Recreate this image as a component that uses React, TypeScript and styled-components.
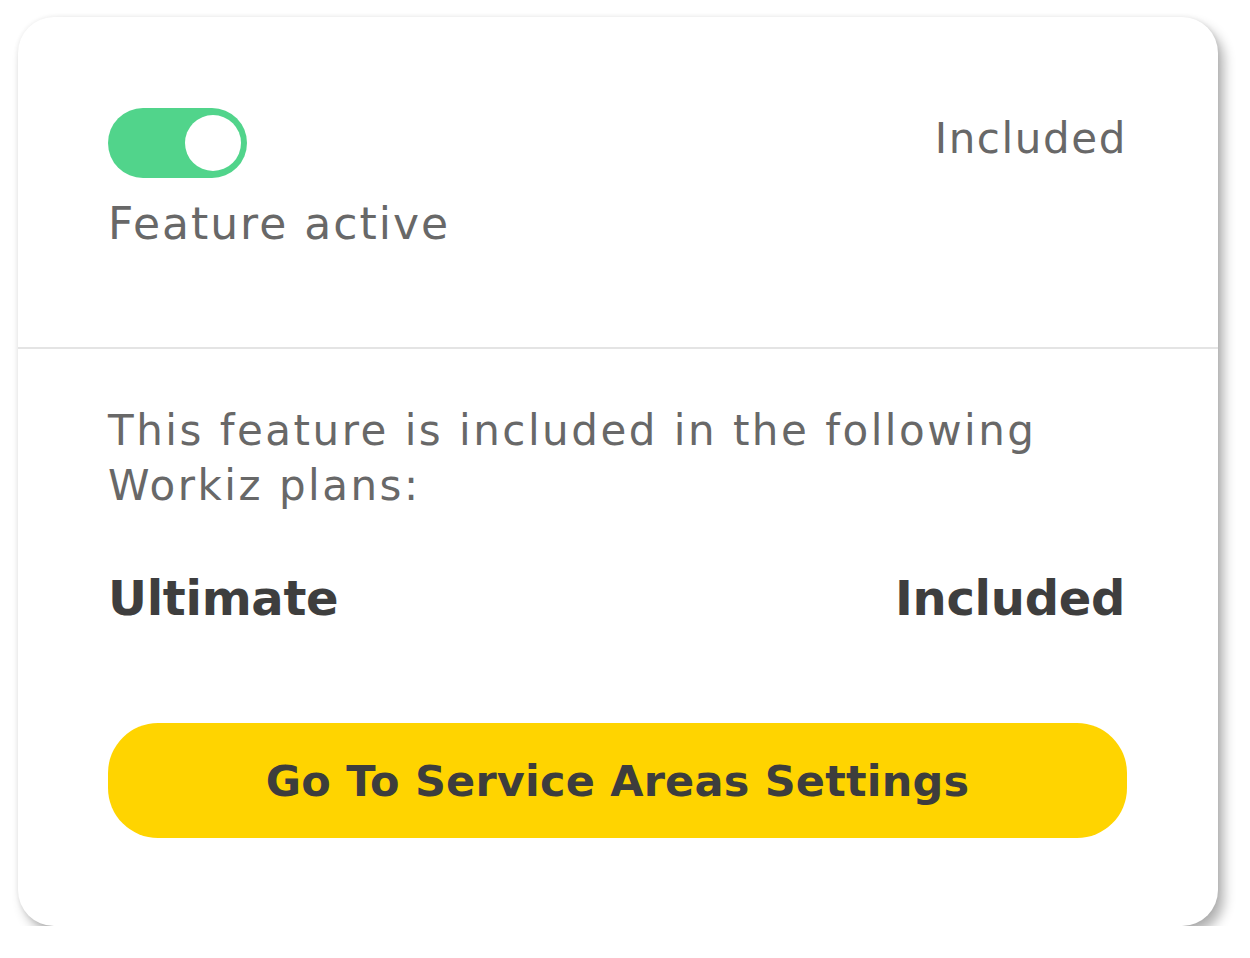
import styled, { createGlobalStyle } from 'styled-components'

const GlobalStyle = createGlobalStyle`
    body {
        margin: 0;
        background: #ffffff;
        font-family: 'DejaVu Sans', 'Liberation Sans', sans-serif;
    }
`

const Page = styled.div`
    padding: 17px 0 0 18px;
`

const Card = styled.div`
    width: 1200px;
    height: 909px;
    background: #ffffff;
    border-radius: 36px;
    box-shadow: 6px 8px 12px rgba(0, 0, 0, 0.3), 0 0 5px rgba(0, 0, 0, 0.08);
    display: flex;
    flex-direction: column;
    overflow: hidden;
`

const TopSection = styled.div`
    height: 332px;
    padding: 91px 93px 0 90px;
    box-sizing: border-box;
    display: flex;
    justify-content: space-between;
    align-items: flex-start;
    border-bottom: 2px solid #e4e4e4;
`

const ToggleColumn = styled.div`
    display: flex;
    flex-direction: column;
    gap: 18px;
`

const Toggle = styled.div<{ $on: boolean }>`
    width: 139px;
    height: 70px;
    border-radius: 35px;
    background: ${(p) => (p.$on ? '#51d48b' : '#cfcfcf')};
    padding: 7px 6px;
    box-sizing: border-box;
    display: flex;
    justify-content: ${(p) => (p.$on ? 'flex-end' : 'flex-start')};
`

const Knob = styled.div`
    width: 56px;
    height: 56px;
    border-radius: 50%;
    background: #ffffff;
`

const ToggleLabel = styled.p`
    margin: 0;
    font-size: 44px;
    line-height: 56px;
    color: #686868;
    letter-spacing: 2px;
`

const StatusText = styled.p`
    margin: 0;
    padding-top: 3px;
    font-size: 42px;
    line-height: 56px;
    color: #686868;
    letter-spacing: 1.6px;
    margin-right: -2px;
`

const BottomSection = styled.div`
    flex: 1;
    padding: 54px 91px 0 90px;
    display: flex;
    flex-direction: column;
`

const Description = styled.p`
    margin: 0;
    font-size: 42px;
    line-height: 55px;
    color: #686868;
    letter-spacing: 2.5px;
`

const PlanRow = styled.div`
    display: flex;
    justify-content: space-between;
    margin-top: 55px;
    padding-right: 2px;
`

const PlanText = styled.span`
    font-size: 48px;
    line-height: 60px;
    font-weight: 700;
    color: #3e3e3e;
    letter-spacing: -0.3px;
`

const ActionButton = styled.button`
    margin-top: 95px;
    height: 115px;
    border: none;
    border-radius: 50px;
    background: #ffd400;
    font-family: inherit;
    font-size: 43px;
    font-weight: 700;
    color: #3d3d3d;
    letter-spacing: 0.2px;
    cursor: pointer;
`

const App = () => {
    return (
        <Page>
            <GlobalStyle />
            <Card>
                <TopSection>
                    <ToggleColumn>
                        <Toggle $on>
                            <Knob />
                        </Toggle>
                        <ToggleLabel>Feature active</ToggleLabel>
                    </ToggleColumn>
                    <StatusText>Included</StatusText>
                </TopSection>
                <BottomSection>
                    <Description>
                        This feature is included in the following
                        <br />
                        Workiz plans:
                    </Description>
                    <PlanRow>
                        <PlanText>Ultimate</PlanText>
                        <PlanText>Included</PlanText>
                    </PlanRow>
                    <ActionButton>Go To Service Areas Settings</ActionButton>
                </BottomSection>
            </Card>
        </Page>
    )
}

export default App
